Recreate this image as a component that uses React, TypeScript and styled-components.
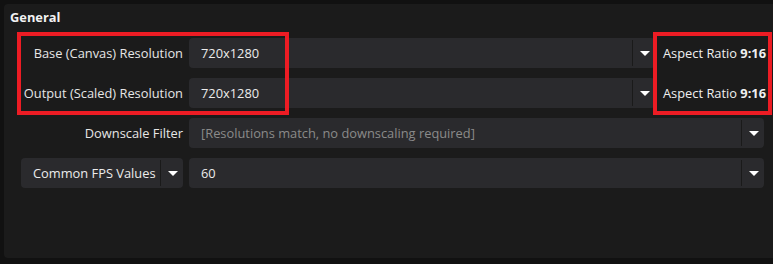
import React from "react";
import styled, { createGlobalStyle } from "styled-components";

const Global = createGlobalStyle`
  html, body { margin: 0; padding: 0; background: #111111; }
  body { font-family: "Open Sans", "Noto Sans", sans-serif; font-size: 12.85px; color: #e8e8e8; }
`;

const Page = styled.div`
  width: 773px;
  height: 264px;
  overflow: hidden;
  padding: 4px 0 0 4px;
  box-sizing: border-box;
  position: relative;
`;

const Panel = styled.section`
  width: 800px;
  height: 254px;
  background: #1b1b1b;
  border-radius: 4px 0 0 4px;
  padding: 5px 0 0 6px;
  box-sizing: border-box;
`;

const Heading = styled.h2`
  margin: 0;
  font-size: 12.85px;
  font-weight: 700;
  line-height: 16px;
  color: #f2f2f2;
`;

const Form = styled.div`
  display: grid;
  grid-template-columns: 162px 575px;
  column-gap: 6px;
  row-gap: 10px;
  margin: 13px 0 0 11px;
`;

const Label = styled.div`
  height: 30px;
  display: flex;
  align-items: center;
  justify-content: flex-end;
  white-space: nowrap;
  color: #e6e6e6;
`;

const FieldRow = styled.div`
  display: flex;
  align-items: center;
  height: 30px;
`;

const Combo = styled.div<{ $grow?: boolean }>`
  height: 30px;
  display: flex;
  align-items: stretch;
  background: #2a2a2d;
  border-radius: 4px;
  flex: ${(p) => (p.$grow ? "1" : "none")};
  box-sizing: border-box;
  min-width: 0;
`;

const ComboText = styled.div<{ $muted?: boolean }>`
  flex: 1;
  display: flex;
  align-items: center;
  padding-left: 12px;
  white-space: nowrap;
  color: ${(p) => (p.$muted ? "#8a8a8a" : "#ececec")};
`;

const ComboButton = styled.div`
  width: 22px;
  border-left: 1px solid #1a1a1a;
  display: flex;
  align-items: center;
  justify-content: center;
  margin: 2px 0;
`;

const Arrow = styled.span`
  width: 0;
  height: 0;
  border-left: 5px solid transparent;
  border-right: 5px solid transparent;
  border-top: 5px solid #ffffff;
  margin-left: 1px;
`;

const Aspect = styled.div`
  width: 109px;
  padding-left: 8px;
  box-sizing: border-box;
  white-space: nowrap;
  color: #f0f0f0;
  b { font-weight: 700; }
`;

const Highlight = styled.div<{ $l: number; $t: number; $w: number; $h: number }>`
  position: absolute;
  left: ${(p) => p.$l}px;
  top: ${(p) => p.$t}px;
  width: ${(p) => p.$w}px;
  height: ${(p) => p.$h}px;
  border: 4px solid #ed1c24;
  box-sizing: border-box;
  pointer-events: none;
`;

const ComboBox = ({ text, muted, grow }: { text: string; muted?: boolean; grow?: boolean }) => (
  <Combo $grow={grow}>
    <ComboText $muted={muted}>{text}</ComboText>
    <ComboButton>
      <Arrow />
    </ComboButton>
  </Combo>
);

export default function App() {
  return (
    <>
      <Global />
      <Page>
        <Panel>
          <Heading>General</Heading>
          <Form>
            <Label>Base (Canvas) Resolution</Label>
            <FieldRow>
              <ComboBox text="720x1280" grow />
              <Aspect>
                Aspect Ratio <b>9:16</b>
              </Aspect>
            </FieldRow>
            <Label>Output (Scaled) Resolution</Label>
            <FieldRow>
              <ComboBox text="720x1280" grow />
              <Aspect>
                Aspect Ratio <b>9:16</b>
              </Aspect>
            </FieldRow>
            <Label>Downscale Filter</Label>
            <FieldRow>
              <ComboBox text="[Resolutions match, no downscaling required]" muted grow />
            </FieldRow>
            <FieldRow>
              <ComboBox text="Common FPS Values" grow />
            </FieldRow>
            <FieldRow>
              <ComboBox text="60" grow />
            </FieldRow>
          </Form>
        </Panel>
        <Highlight $l={17} $t={32} $w={272} $h={83} />
        <Highlight $l={653} $t={32} $w={119} $h={83} />
      </Page>
    </>
  );
}
